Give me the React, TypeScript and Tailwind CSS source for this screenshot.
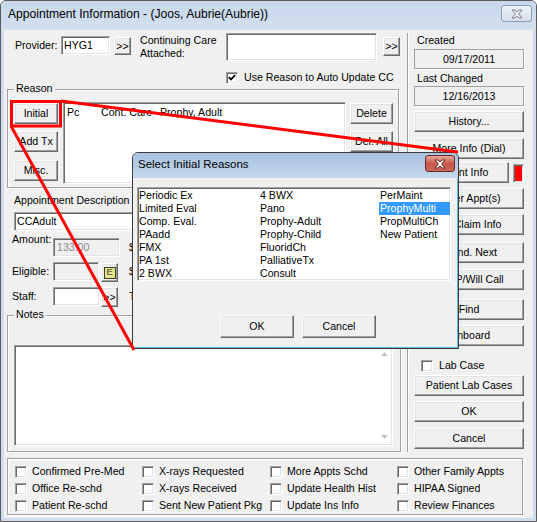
import React from "react";

const raised =
  "bg-[#f0f0f0] border border-t-white border-l-white border-r-[#696969] border-b-[#696969] shadow-[inset_-1px_-1px_0_#a0a0a0,inset_1px_1px_0_#e3e3e3]";
const sunken =
  "border border-t-[#a0a0a0] border-l-[#a0a0a0] border-r-white border-b-white shadow-[inset_1px_1px_0_#696969,inset_-1px_-1px_0_#e3e3e3]";
const etched = "border border-[#a0a0a0] shadow-[inset_1px_1px_0_#fff,1px_1px_0_#fff]";

function Btn({ className = "", children }: { className?: string; children?: React.ReactNode }) {
  return (
    <div className={`${raised} flex items-center justify-center leading-[13px] shrink-0 whitespace-nowrap overflow-hidden ${className}`}>
      {children}
    </div>
  );
}

function Check({ checked = false, className = "" }: { checked?: boolean; className?: string }) {
  return (
    <div className={`w-[12px] h-[12px] bg-white ${sunken} flex items-center justify-center shrink-0 ${className}`}>
      {checked && (
        <svg width="8" height="7" viewBox="0 0 8 7">
          <path d="M0.8 3.2 L3 5.4 L7.2 1" stroke="#000" strokeWidth="1.8" fill="none" />
        </svg>
      )}
    </div>
  );
}

function Group({ label, className = "", children }: { label?: string; className?: string; children?: React.ReactNode }) {
  return (
    <div className={`relative ${etched} ${className}`}>
      {label && (
        <span className="absolute top-[-8px] left-[6px] px-[2px] bg-[#f0f0f0] leading-[13px]">{label}</span>
      )}
      {children}
    </div>
  );
}

function CloseGlyph({ fill, stroke }: { fill: string; stroke: string }) {
  return (
    <svg width="12" height="10" viewBox="0 0 12 10">
      <path
        d="M1 1 L4 1 L6 3.2 L8 1 L11 1 L7.6 5 L11 9 L8 9 L6 6.8 L4 9 L1 9 L4.4 5 Z"
        fill={fill}
        stroke={stroke}
        strokeWidth="0.9"
        strokeLinejoin="round"
      />
    </svg>
  );
}

export default function App() {
  const col1 = ["Periodic Ex", "Limited Eval", "Comp. Eval.", "PAadd", "FMX", "PA 1st", "2 BWX"];
  const col2 = ["4 BWX", "Pano", "Prophy-Adult", "Prophy-Child", "FluoridCh", "PalliativeTx", "Consult"];
  const col3 = ["PerMaint", "ProphyMulti", "PropMultiCh", "New Patient"];
  const bottom = [
    ["Confirmed Pre-Med", "X-rays Requested", "More Appts Schd", "Other Family Appts"],
    ["Office Re-schd", "X-rays Received", "Update Health Hist", "HIPAA Signed"],
    ["Patient Re-schd", "Sent New Patient Pkg", "Update Ins Info", "Review Finances"],
  ];

  return (
    <div className="relative w-[537px] h-[522px] overflow-hidden border border-[#5a5a5a] rounded-t-[6px] bg-[#cfdcec] font-['Liberation_Sans',Arial,sans-serif] text-[10.6px] text-black select-none">
      {/* title bar */}
      <div className="h-[29px] flex items-start justify-between bg-gradient-to-b from-[#c8d7eb] to-[#d3e0f0]">
        <span className="ml-[7px] mt-[6px] text-[12.1px] leading-[15px] text-black">
          Appointment Information - (Joos, Aubrie(Aubrie))
        </span>
        <div className="mt-[4px] mr-[4px] w-[31px] h-[17px] rounded-[3px] border border-[#8c9cb2] bg-gradient-to-b from-[#eef2f7] to-[#d6dfeb] flex items-center justify-center">
          <CloseGlyph fill="#f4f6f9" stroke="#6b7585" />
        </div>
      </div>

      {/* body */}
      <div className="mx-[3px] h-[488px] bg-[#f0f0f0] pl-[3px] flex flex-col">
        <div className="flex h-[422px]">
          {/* left column */}
          <div className="w-[394px] flex flex-col shrink-0">
            {/* row 1 */}
            <div className="mt-[3px] h-[28px] flex items-start">
              <span className="w-[54px] pl-[8px] mt-[6px] leading-[13px]">Provider:</span>
              <div className={`w-[49px] h-[19px] mt-[3px] bg-white ${sunken} pl-[2px] leading-[17px]`}>HYG1</div>
              <Btn className="ml-[4px] w-[17px] h-[18px] mt-[4px]">&gt;&gt;</Btn>
              <span className="ml-[9px] w-[86px] mt-[1px] leading-[13px]">
                Continuing Care
                <br />
                Attached:
              </span>
              <div className={`w-[151px] h-[28px] bg-white ${sunken}`}></div>
              <Btn className="ml-[6px] w-[17px] h-[19px] mt-[4px]">&gt;&gt;</Btn>
            </div>
            {/* row 2 */}
            <div className="mt-[10px] h-[13px] flex items-center pl-[219px]">
              <Check checked />
              <span className="ml-[6px] leading-[13px]">Use Reason to Auto Update CC</span>
            </div>
            {/* reason */}
            <Group label="Reason" className="mt-[5px] w-[392px] h-[99px] flex items-start">
              <div className="pl-[6px] pt-[13px] flex flex-col">
                <Btn className="w-[44px] h-[21px]">Initial</Btn>
                <Btn className="w-[44px] h-[21px] mt-[7px]">Add Tx</Btn>
                <Btn className="w-[44px] h-[21px] mt-[8px]">Misc.</Btn>
              </div>
              <div className={`ml-[5px] mt-[12px] w-[283px] h-[82px] bg-white ${sunken} pt-[3px] pl-[3px] flex leading-[13px]`}>
                <span className="w-[34px]">Pc</span>
                <span className="w-[59px]">Cont. Care</span>
                <span>Prophy, Adult</span>
              </div>
              <div className="ml-[4px] mt-[13px] flex flex-col">
                <Btn className="w-[43px] h-[21px]">Delete</Btn>
                <Btn className="w-[43px] h-[21px] mt-[7px]">Del. All</Btn>
              </div>
            </Group>
            <span className="mt-[6px] pl-[7px] leading-[13px]">Appointment Description</span>
            <div className={`ml-[7px] mt-[5px] w-[230px] h-[19px] bg-white ${sunken} pl-[2px] leading-[17px]`}>CCAdult</div>
            {/* amount */}
            <div className="mt-[2px] flex items-start">
              <span className="w-[46px] pl-[5px] leading-[13px]">Amount:</span>
              <div className={`w-[67px] h-[19px] mt-[5px] bg-[#f0f0f0] ${sunken} pl-[3px] leading-[17px] text-[#8a8a8a]`}>133.00</div>
              <span className="ml-[9px] mt-[8px] leading-[13px]">$</span>
            </div>
            {/* eligible */}
            <div className="mt-[5px] flex items-start">
              <span className="w-[46px] pl-[5px] mt-[3px] leading-[13px]">Eligible:</span>
              <div className={`w-[46px] h-[19px] bg-[#f0f0f0] ${sunken}`}></div>
              <Btn className="ml-[2px] mt-[1px] w-[17px] h-[19px]">
                <div className="w-[12px] h-[12px] bg-[#e4e48a] border border-[#3d3d2a] flex items-center justify-center text-[9px] font-bold leading-none text-[#6e6e52]">
                  E
                </div>
              </Btn>
              <span className="ml-[11px] mt-[3px] leading-[13px]">$</span>
            </div>
            {/* staff */}
            <div className="mt-[5px] flex items-start">
              <span className="w-[46px] pl-[5px] mt-[3px] leading-[13px]">Staff:</span>
              <div className={`w-[47px] h-[19px] bg-white ${sunken}`}></div>
              <Btn className="ml-[1px] w-[17px] h-[20px]">&gt;&gt;</Btn>
              <span className="ml-[11px] mt-[3px] leading-[13px]">T</span>
            </div>
            {/* notes */}
            <Group label="Notes" className="mt-[8px] w-[394px] h-[137px] pl-[6px] pt-[29px]">
              <div className={`w-[379px] h-[101px] bg-white ${sunken} flex justify-end`}>
                <div className="w-[16px] h-full flex flex-col items-center justify-between py-[6px]">
                  <svg width="7" height="4" viewBox="0 0 7 4">
                    <path d="M0 4 L3.5 0 L7 4 Z" fill="#c4c4c4" />
                  </svg>
                  <svg width="7" height="4" viewBox="0 0 7 4">
                    <path d="M0 0 L3.5 4 L7 0 Z" fill="#c4c4c4" />
                  </svg>
                </div>
              </div>
            </Group>
          </div>

          {/* separator */}
          <div className="ml-[6px] mt-[3px] w-[2px] h-[419px] border-l border-l-[#a0a0a0] border-r border-r-white shrink-0"></div>

          {/* right column */}
          <div className="ml-[5px] w-[111px] flex flex-col shrink-0">
            <span className="mt-[4px] pl-[3px] leading-[13px]">Created</span>
            <div className="mt-[2px] w-[110px] h-[20px] border border-[#a0a0a0] shadow-[1px_1px_0_#fff] flex items-center justify-center leading-[13px]">
              09/17/2011
            </div>
            <span className="mt-[3px] pl-[3px] leading-[13px]">Last Changed</span>
            <div className="mt-[1px] w-[110px] h-[20px] border border-[#a0a0a0] shadow-[1px_1px_0_#fff] flex items-center justify-center leading-[13px]">
              12/16/2013
            </div>
            <Btn className="mt-[5px] w-[110px] h-[21px]">History...</Btn>
            <Btn className="mt-[6px] w-[110px] h-[21px]">More Info (Dial)</Btn>
            <div className="mt-[3px] flex items-start">
              <Btn className="w-[95px] h-[21px]">Patient Info</Btn>
              <div className={`ml-[4px] mt-[2px] w-[11px] h-[19px] bg-[#ff0000] ${sunken}`}></div>
            </div>
            <Btn className="mt-[5px] w-[110px] h-[21px]">Other Appt(s)</Btn>
            <Btn className="mt-[5px] w-[110px] h-[21px]">Ins Claim Info</Btn>
            <Btn className="mt-[7px] w-[110px] h-[21px]">Rmnd. Next</Btn>
            <Btn className="mt-[6px] w-[110px] h-[21px]">ASAP/Will Call</Btn>
            <Btn className="mt-[9px] w-[110px] h-[21px]">Find</Btn>
            <Btn className="mt-[5px] w-[110px] h-[21px]">Pinboard</Btn>
            <div className="mt-[13px] h-[13px] pl-[7px] flex items-center">
              <Check />
              <span className="ml-[6px] leading-[13px]">Lab Case</span>
            </div>
            <Btn className="mt-[3px] w-[110px] h-[21px]">Patient Lab Cases</Btn>
            <Btn className="mt-[5px] w-[110px] h-[21px]">OK</Btn>
            <Btn className="mt-[6px] w-[110px] h-[21px]">Cancel</Btn>
          </div>
        </div>

        {/* bottom checkboxes */}
        <Group className="mt-[6px] w-[516px] h-[57px] pt-[4px] pl-[7px]">
          {bottom.map((row, ri) => (
            <div key={ri} className="h-[17px] grid grid-cols-[127px_128px_127px_1fr] items-center">
              {row.map((t) => (
                <div key={t} className="flex items-center">
                  <Check />
                  <span className="ml-[5px] leading-[13px] whitespace-nowrap">{t}</span>
                </div>
              ))}
            </div>
          ))}
        </Group>
      </div>

      {/* modal dialog */}
      <div className="absolute left-[131px] top-[151px] w-[327px] h-[197px] border border-[#3a3a3a] rounded-t-[6px] bg-[#f0f0f0] flex flex-col overflow-hidden shadow-[inset_-1px_-1px_0_#5bb8e6]">
        <div className="h-[25px] flex items-start justify-between bg-gradient-to-b from-[#a8c2e0] to-[#c5d8ee]">
          <span className="ml-[5px] mt-[4px] text-[11.5px] leading-[14px]">Select Initial Reasons</span>
          <div className="mt-[2px] mr-[3px] w-[30px] h-[17px] rounded-[3px] border border-[#6e2a22] bg-gradient-to-b from-[#e3a79d] via-[#c9584a] to-[#c8665a] flex items-center justify-center">
            <CloseGlyph fill="#ffffff" stroke="#5a1e18" />
          </div>
        </div>
        <div className={`ml-[4px] mt-[9px] w-[314px] h-[94px] bg-white ${sunken} pt-[1px] grid grid-cols-[121px_120px_1fr] leading-[13px]`}>
          <div className="flex flex-col">
            {col1.map((t) => (
              <span key={t} className="pl-[1px]">{t}</span>
            ))}
          </div>
          <div className="flex flex-col">
            {col2.map((t) => (
              <span key={t} className="pl-[1px]">{t}</span>
            ))}
          </div>
          <div className="flex flex-col">
            {col3.map((t) => (
              <span key={t} className={`pl-[1px] ${t === "ProphyMulti" ? "bg-[#3399ff] text-white" : ""}`}>
                {t}
              </span>
            ))}
          </div>
        </div>
        <div className="mt-[34px] ml-[87px] flex gap-[8px]">
          <Btn className="w-[74px] h-[23px]">OK</Btn>
          <Btn className="w-[74px] h-[23px]">Cancel</Btn>
        </div>
      </div>

      {/* red annotations */}
      <svg className="absolute left-[-1px] top-[-1px] pointer-events-none" width="537" height="522" viewBox="0 0 537 522">
        <rect x="11.5" y="101.5" width="49" height="24.5" fill="none" stroke="#ff0000" strokeWidth="3" />
        <line x1="61" y1="101" x2="458" y2="152" stroke="#ff0000" strokeWidth="3" />
        <line x1="11" y1="126" x2="134" y2="350" stroke="#ff0000" strokeWidth="3" />
      </svg>
    </div>
  );
}
